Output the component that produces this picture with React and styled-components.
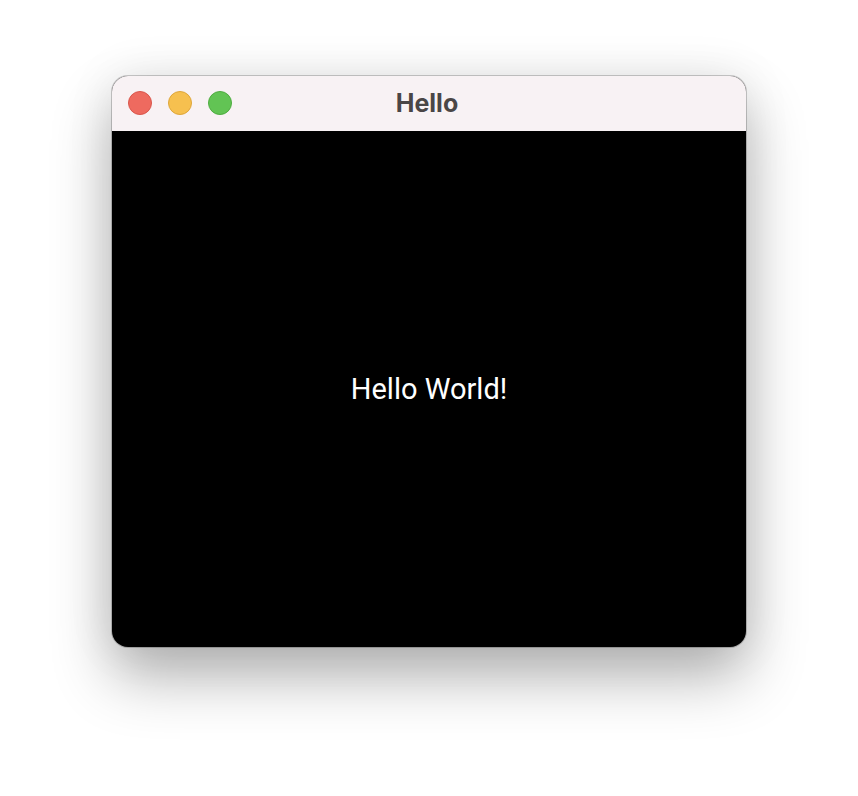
import React from 'react';
import styled, { createGlobalStyle } from 'styled-components';

const GlobalStyle = createGlobalStyle`
  html, body {
    margin: 0;
    padding: 0;
    background: #ffffff;
  }
`;

const Page = styled.div`
  width: 858px;
  height: 796px;
  box-sizing: border-box;
  padding: 76px 0 0 112px;
`;

const Window = styled.div`
  width: 634px;
  height: 571px;
  border-radius: 16px;
  overflow: hidden;
  display: flex;
  flex-direction: column;
  box-shadow: 0 0 0 1px rgba(0, 0, 0, 0.2), 0 30px 60px rgba(0, 0, 0, 0.3),
    0 0 50px rgba(0, 0, 0, 0.08);
  background: #000;
`;

const TitleBar = styled.div`
  position: relative;
  height: 55px;
  flex-shrink: 0;
  background: #f8f2f4;
  display: flex;
  align-items: center;
  justify-content: center;
`;

const Lights = styled.div`
  position: absolute;
  left: 16px;
  top: 15px;
  display: flex;
  gap: 16px;
`;

const Light = styled.span`
  width: 24px;
  height: 24px;
  border-radius: 50%;
  box-sizing: border-box;
  background: ${(p) => p.color};
  border: 1px solid ${(p) => p.edge};
`;

const Title = styled.h1`
  margin: 0;
  font-family: Inter, 'Open Sans', sans-serif;
  font-weight: 700;
  font-size: 25px;
  color: #4a4646;
  transform: translate(-2px, -1px);
`;

const Content = styled.div`
  flex: 1;
  display: flex;
  align-items: center;
  justify-content: center;
`;

const Message = styled.p`
  margin: 0;
  font-family: Roboto, sans-serif;
  font-size: 29px;
  color: #fff;
`;

const App = () => (
  <>
    <GlobalStyle />
    <Page>
      <Window>
        <TitleBar>
          <Lights>
            <Light color="#ee6a5f" edge="#d9564c" />
            <Light color="#f6c04f" edge="#dea63a" />
            <Light color="#62c454" edge="#4fac40" />
          </Lights>
          <Title>Hello</Title>
        </TitleBar>
        <Content>
          <Message>Hello World!</Message>
        </Content>
      </Window>
    </Page>
  </>
);

export default App;
